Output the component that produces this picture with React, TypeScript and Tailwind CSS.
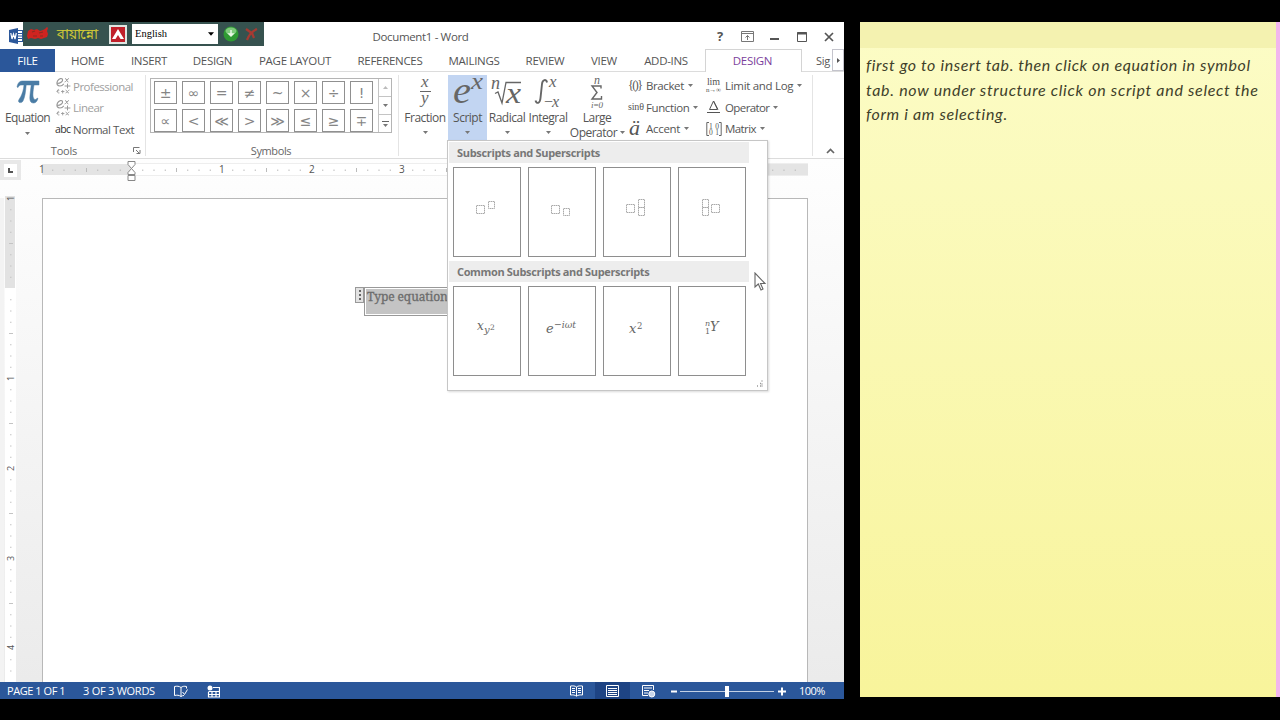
import React from "react";

const SANS = "font-['Open_Sans','Noto_Sans',sans-serif]";
const MATH = "DejaVu Serif, Liberation Serif, serif";
const SERIF = "Liberation Serif, serif";

function Caret({ className = "" }: { className?: string }) {
  return (
    <svg width="5" height="3" viewBox="0 0 5 3" className={`shrink-0 ${className}`}>
      <path d="M0 0h5L2.500 3z" fill="#777" />
    </svg>
  );
}

const tabs = [
  { t: "HOME", c: "w-[65px]" },
  { t: "INSERT", c: "w-[58px]" },
  { t: "DESIGN", c: "w-[69px]" },
  { t: "PAGE LAYOUT", c: "w-[96px]" },
  { t: "REFERENCES", c: "w-[94px]" },
  { t: "MAILINGS", c: "w-[74px]" },
  { t: "REVIEW", c: "w-[68px]" },
  { t: "VIEW", c: "w-[50px]" },
  { t: "ADD-INS", c: "w-[74px]" },
];

const symbols = ["±", "∞", "=", "≠", "~", "×", "÷", "!", "∝", "<", "≪", ">", "≫", "≤", "≥", "∓"];

function TitleBar() {
  return (
    <div className="flex h-[27px] w-full">
      <div className="flex w-[264px] pl-[9px]">
        <svg width="14" height="16" viewBox="0 0 14 16" className="mt-[6px] shrink-0">
          <rect x="7" y="2.500" width="6.500" height="11" fill="#fff" stroke="#2b579a" />
          <path d="M8 5.500h5M8 8h5M8 10.500h5" stroke="#2b579a" />
          <path d="M0 2l9-2v16l-9-2z" fill="#2b579a" />
          <path d="M1.800 5l1.200 6 1.500-5 1.500 5 1.300-6" fill="none" stroke="#fff" strokeWidth="1.200" />
        </svg>
        <div className="flex h-[24px] w-[241px] items-center bg-[#36524f]">
          <svg width="22" height="16" viewBox="0 0 22 16" className="ml-[4px] shrink-0">
            <path d="M1 5l3-2 3 1 3-1 3 2 3-1 2-1 2-2 1 1-1 3 1 3-1 3-3 1-3 1-3-1-3 1-4-1-3 1-1-3z" fill="#cf2420" />
            <path d="M5 6l3-1M12 7l4-1M6 10h4M13 10h3" stroke="#8b2a22" strokeWidth="1.200" />
          </svg>
          <span className="ml-[8px] w-[44px] whitespace-nowrap text-[13.500px] leading-[20px] tracking-[-0.4px] text-[#d8cf35] [-webkit-text-stroke:0.2px_#d8cf35]">বায়ান্নো</span>
          <svg width="18" height="19" viewBox="0 0 18 19" className="ml-[8px] shrink-0">
            <rect width="18" height="19" fill="#dfe6e2" />
            <rect x="2" y="2" width="14" height="15" fill="#c0202a" />
            <path d="M9 4l6 10h-3.500L9 10l-2.500 4H3z" fill="#fff" />
          </svg>
          <div className="ml-[5px] flex h-[20px] w-[86px] items-center justify-between bg-white pl-[3px] pr-[4px]">
            <span className="font-['Liberation_Serif',serif] text-[10.500px] text-black">English</span>
            <svg width="6" height="4" viewBox="0 0 7 4"><path d="M0 0h7L3.500 4z" fill="#000" /></svg>
          </div>
          <svg width="16" height="16" viewBox="0 0 16 16" className="ml-[5px] shrink-0">
            <circle cx="8" cy="8" r="7.500" fill="#2f9a33" />
            <ellipse cx="8" cy="5" rx="5.500" ry="3.500" fill="#7fcb7c" />
            <path d="M8 4v5M6 8l2 2 2-2z" fill="#e9f8e6" stroke="#e9f8e6" strokeWidth="1.500" />
          </svg>
          <svg width="15" height="16" viewBox="0 0 15 16" className="ml-[5px] shrink-0">
            <path d="M2 3l7 5M13 3Q6 6 3 14M8 7l2 5" fill="none" stroke="#a63a32" strokeWidth="2.200" />
          </svg>
        </div>
      </div>
      <div className="flex w-[313px] items-center justify-center pt-[3px] text-[11.500px] text-[#555]">
        <span className="tracking-[-0.35px]">Document1 - Word</span>
      </div>
      <div className="flex flex-1 items-center justify-end pr-[10px] pt-[2px]">
        <span className="w-[10px] text-center text-[13px] font-bold text-[#555]">?</span>
        <svg width="13" height="11" viewBox="0 0 13 11" className="ml-[16px]">
          <path d="M.5 .5h12v10H.5zM.5 2.500h12M6.500 9V4.500M4.500 6.500l2-2 2 2" fill="none" stroke="#777" />
        </svg>
        <svg width="9" height="11" viewBox="0 0 9 11" className="ml-[16px]"><path d="M0 8h9" stroke="#555" strokeWidth="2" /></svg>
        <svg width="10" height="10" viewBox="0 0 10 10" className="ml-[18px]">
          <path d="M.5 .5h9v9H.5z" fill="none" stroke="#555" /><path d="M0 1.500h10" stroke="#555" strokeWidth="2" />
        </svg>
        <svg width="10" height="10" viewBox="0 0 10 10" className="ml-[17px]"><path d="M1 1l8 8M9 1L1 9" stroke="#555" strokeWidth="1.700" /></svg>
      </div>
    </div>
  );
}

function TabRow() {
  return (
    <div className="flex h-[23px] text-[11.500px] leading-[23px] tracking-[-0.3px] text-[#555]">
      <div className="w-[55px] bg-[#2b579a] text-center text-white">FILE</div>
      <div className="flex border-b border-[#dcdcdc]">
        {tabs.map((x) => (
          <div key={x.t + x.c} className={`${x.c} whitespace-nowrap text-center`}>{x.t}</div>
        ))}
        <div className="w-[2px]" />
      </div>
      <div className="w-[97px] border-x border-t border-[#d4d4d4] pr-[2px] text-center leading-[22px] text-[#7b3f9d]">DESIGN</div>
      <div className="flex flex-1 border-b border-[#dcdcdc]">
        <span className="w-[30px] whitespace-nowrap pl-[14px] text-[11px]">Sig</span>
        <div className="flex w-[12px] items-center justify-center border border-[#c4c4cc]">
          <svg width="3" height="5" viewBox="0 0 3 5"><path d="M0 0v5l3-2.500z" fill="#555" /></svg>
        </div>
      </div>
    </div>
  );
}

function ExIcon() {
  return (
    <svg width="17" height="18" viewBox="0 0 17 18" className="-mr-px shrink-0 overflow-visible" fill="none" stroke="#999" strokeLinecap="round">
      <path d="M2 6.500C6 6.500 8 4 7.500 2.500S4 1 2.500 4 2.500 9 5 9s3-1 3.500-1.800" strokeWidth="1.200" />
      <path d="M10.500 1.500c1.500 0 1 3.500 2.500 3.500M13.500 1.500c-1 0-2.500 3.500-3.500 3.500" />
      <path d="M10 9h5M12.500 7v4" />
      <path d="M2 14.500c2 0 2.500-2 1.300-2S1.500 16.500 4 16M6.500 14.500h2.500M7.700 13.500v2.500M11 13c1 0 1 3 2.500 3M14 13c-1 0-2 3-3 3" strokeWidth=".9" />
    </svg>
  );
}

function ToolsGroup() {
  return (
    <div className="mt-[3px] flex h-[81px] w-[146px] flex-col border-r border-[#e4e4e4]">
      <div className="flex h-[67px]">
        <div className="flex w-[55px] flex-col items-center">
          <svg width="26" height="28" viewBox="0 0 26 28" className="mt-[3px]">
            <path d="M2 9C3 4 5 3 8 3h16v4h-5c-1 6-1.500 11-.5 13 .8 2 2.500 2 3.800 0l.7.500c-1 3-2.500 4.500-4.500 4.500-3.500 0-4-3.500-3.500-8 .3-3 .7-6 1.200-10h-5C10.500 14 10 19 8 23c-1 2-4.500 2.300-4.500 0C3.500 21 8 18 9 7H7C5 7 4 7.500 3 9.500z" fill="#4a7ca5" stroke="#4a7ca5" strokeWidth=".5" />
          </svg>
          <span className="mt-[3px] text-[12px] leading-[18px] tracking-[-0.6px]">Equation</span>
          <Caret className="mt-[5px]" />
        </div>
        <div className="flex flex-col text-[11.500px] leading-[21px]">
          <div className="flex h-[22px] items-center gap-[2px] text-[#a0a0a0]"><ExIcon /><span className="tracking-[-0.5px]">Professional</span></div>
          <div className="flex h-[21px] items-center gap-[2px] text-[#a0a0a0]"><ExIcon /><span className="tracking-[-0.5px]">Linear</span></div>
          <div className="flex h-[22px] items-center gap-[3px] whitespace-nowrap"><span className="w-[15px] text-[10.500px] tracking-[-0.6px] text-[#333]">abc</span><span className="tracking-[-0.45px]">Normal Text</span></div>
        </div>
      </div>
      <div className="flex h-[17px] items-center">
        <span className="w-[128px] pt-[5px] text-center text-[11px] tracking-[-0.2px] text-[#666]">Tools</span>
        <svg width="8" height="7" viewBox="0 0 8 7" className="ml-[5px] mt-[4px]">
          <path d="M.5 5V.5h6M3 3l3 3M7 3v3.500H3.500" fill="none" stroke="#777" />
        </svg>
      </div>
    </div>
  );
}

function SymbolsGroup() {
  return (
    <div className="mt-[3px] flex h-[81px] w-[253px] flex-col border-r border-[#e4e4e4] pl-[4px] pt-[3px]">
      <div className="flex h-[56px] w-[242px] border border-[#b5b5b5]">
        <div className="grid w-[227px] grid-cols-8 gap-y-[5px] pl-[3px] pt-[2px]">
          {symbols.map((s) => (
            <div key={s} className="flex h-[23px] w-[23px] items-center justify-center border border-[#909090] font-['DejaVu_Sans',sans-serif] text-[14px] leading-none text-[#858585]">{s}</div>
          ))}
        </div>
        <div className="flex w-[13px] flex-col border-l border-[#c4c4c4]">
          <div className="flex flex-1 items-center justify-center"><svg width="5" height="3" viewBox="0 0 5 3"><path d="M0 3h5L2.500 0z" fill="#bbb" /></svg></div>
          <div className="flex flex-1 items-center justify-center border-y border-[#c4c4c4]"><Caret /></div>
          <div className="flex flex-1 flex-col items-center justify-center gap-[2px]"><div className="h-px w-[7px] bg-[#666]" /><Caret /></div>
        </div>
      </div>
      <div className="mt-[10px] h-[15px] w-[242px] text-center text-[11px] leading-[15px] tracking-[-0.4px] text-[#666]">Symbols</div>
    </div>
  );
}

function BigButton({ label, width, active, children }: { label: string; width: string; active?: boolean; children: React.ReactNode }) {
  return (
    <div className={`${width} flex h-[65px] flex-col items-center ${active ? "bg-[#c2d5f2]" : ""}`}>
      <svg width="38" height="34" viewBox="0 0 38 34" className="shrink-0 overflow-visible" fill="#666" stroke="none" fontFamily={SERIF} fontStyle="italic">{children}</svg>
      <span className="whitespace-nowrap text-[12px] leading-[18px] tracking-[-0.5px]">{label}</span>
      <Caret className="mt-[4px]" />
    </div>
  );
}

function SmallItem({ label, icon, spacing }: { label: string; icon: React.ReactNode; spacing: string }) {
  return (
    <div className="flex h-[21.500px] items-center whitespace-nowrap text-[11.500px]">
      <svg width="18" height="18" viewBox="0 0 18 18" className="shrink-0 overflow-visible" fill="#555" fontFamily={SERIF}>{icon}</svg>
      <span className={spacing}>{label}</span>
      <Caret className="ml-[4px]" />
    </div>
  );
}

function StructuresGroup() {
  return (
    <div className="mt-[3px] flex h-[81px] w-[414px] border-r border-[#e4e4e4] pl-[1px]">
      <BigButton label="Fraction" width="w-[50px]">
        <text x="15" y="12" fontSize="17">x</text><path d="M14 16.500h11" stroke="#666" /><text x="15" y="28" fontSize="17">y</text>
      </BigButton>
      <BigButton label="Script" width="w-[39px] -ml-[2px]" active>
        <text x="4" y="28" fontSize="37" textLength="18" lengthAdjust="spacingAndGlyphs">e</text><text x="22" y="14" fontSize="23" textLength="12" lengthAdjust="spacingAndGlyphs">x</text>
      </BigButton>
      <BigButton label="Radical" width="w-[40px]">
        <text x="3" y="14" fontSize="18">n</text><text x="18" y="28" fontSize="29" textLength="15" lengthAdjust="spacingAndGlyphs">x</text>
        <path d="M7 18.500l3-1.500 4 11 4-20.500h15" fill="none" stroke="#666" strokeWidth="1.300" />
      </BigButton>
      <BigButton label="Integral" width="w-[42px]">
        <path d="M18 7.500C17.500 4 13.500 4 13 9L11.500 23c-.5 6-4 6-5 2.500" fill="none" stroke="#666" strokeWidth="1.900" />
        <text x="20" y="12" fontSize="17">x</text><text x="14" y="32" fontSize="16" textLength="16">−x</text>
      </BigButton>
      <div className="-ml-px mr-px flex h-[65px] w-[58px] flex-col items-center">
        <svg width="20" height="34" viewBox="0 0 20 34" className="shrink-0 overflow-visible" fill="#666" fontFamily={SERIF} fontStyle="italic">
          <text x="7" y="9" fontSize="12">n</text>
          <path d="M14 13.500V11H5l5 6.500-5 6.500h9.500v-3" fill="none" stroke="#666" strokeWidth="1.400" />
          <text x="4" y="33" fontSize="9" textLength="12">i=0</text>
        </svg>
        <span className="text-[12px] leading-[18px] tracking-[-0.5px]">Large</span>
        <span className="-mt-[2px] ml-px flex items-center gap-[3px] text-[12px] leading-[15px] tracking-[-0.5px]">Operator<Caret /></span>
      </div>
      <div className="flex w-[79px] flex-col pl-[1px]">
        <SmallItem label="Bracket" spacing="tracking-[-0.4px]" icon={<text x="0" y="12" fontSize="12" textLength="15">{"{()}"}</text>} />
        <SmallItem label="Function" spacing="tracking-[-0.4px]" icon={<text x="0" y="12" fontSize="10" textLength="16">sinθ</text>} />
        <SmallItem label="Accent" spacing="tracking-[-0.3px]" icon={<text x="1" y="15" fontSize="22" fontStyle="italic">ä</text>} />
      </div>
      <div className="flex flex-col">
        <SmallItem label="Limit and Log" spacing="pl-[1px] tracking-[-0.3px]" icon={<><text x="1" y="8" fontSize="10" textLength="13">lim</text><text x="0" y="15" fontSize="7" textLength="15">n→∞</text></>} />
        <SmallItem label="Operator" spacing="pl-[1px] tracking-[-0.6px]" icon={<path d="M3.500 11.500L7.500 3l4 8.500zM1 14.500h13M7.500 3l4.500 8.500" fill="none" stroke="#555" />} />
        <SmallItem label="Matrix" spacing="pl-[1px] tracking-[-0.6px]" icon={<><path d="M3 2.500H.8v13H3M13 2.500h2.200v13H13" fill="none" stroke="#666" /><text x="3" y="8.500" fontSize="7.500" textLength="10">1 0</text><text x="3" y="15" fontSize="7.500" textLength="10">0 1</text></>} />
      </div>
    </div>
  );
}

function HorizontalRuler() {
  const ticks = Array.from({ length: 67 }, (_, i) => i + 1);
  return (
    <div className="flex h-[21px]">
      <div className="mt-px flex h-[20px] w-[21px] items-center justify-center bg-[#e8e8e8]">
        <div className="flex h-[13px] w-[13px] items-center justify-center bg-white">
          <svg width="5" height="5" viewBox="0 0 5 5"><path d="M1 0v4h4" fill="none" stroke="#555" strokeWidth="2" /></svg>
        </div>
      </div>
      <svg width="780" height="22" viewBox="36 159 780 22" className="ml-[15px] shrink-0" fontFamily="Open Sans, sans-serif" fontSize="10" fill="#555">
        <rect x="42" y="164" width="766" height="11" fill="#fff" />
        <rect x="42" y="164" width="90" height="11" fill="#e4e4e4" />
        <rect x="718" y="164" width="90" height="11" fill="#e4e4e4" />
        {ticks.map((i) => {
          const x = 41.5 + i * 11.25;
          if (i % 8 === 0) return null;
          return <path key={i} d={i % 4 === 0 ? `M${x} 168v4` : `M${x} 169.500v1.500`} stroke="#bbb" />;
        })}
        <path d="M132 163.500h676M132 175.500h676" stroke="#eee" />
        <text x="39" y="173">1</text><text x="219" y="173">1</text><text x="309" y="173">2</text><text x="399" y="173">3</text>
        <path d="M128 161.500h7v3l-3.500 4-3.500-4zM131.500 168.500l3.500 4v2h-7v-2zM128 175.500h7v5h-7z" fill="#fff" stroke="#888" />
      </svg>
    </div>
  );
}

function VerticalRuler() {
  const nums = [["1", 198], ["1", 378], ["2", 468], ["3", 558], ["4", 647]] as const;
  const ticks = Array.from({ length: 43 }, (_, i) => i);
  return (
    <svg width="42" height="502" viewBox="0 180 42 502" className="shrink-0" fontFamily="Open Sans, sans-serif" fontSize="9" fill="#555">
      <rect x="0" y="198" width="4" height="484" fill="#f3f3f3" />
      <rect x="5" y="198" width="11" height="484" fill="#fff" />
      <rect x="5" y="196" width="10" height="92" fill="#e2e2e2" />
      {ticks.map((i) => {
        const y = 198.5 + i * 11.25;
        if (i % 8 === 0) return null;
        return <path key={i} d={i % 4 === 0 ? `M9 ${y}h4` : `M10 ${y}h1.500`} stroke="#c4c4c4" />;
      })}
      {nums.map(([n, y]) => (
        <text key={y} transform={`translate(14 ${y + 3}) rotate(-90)`}>{n}</text>
      ))}
    </svg>
  );
}

function Cell({ children }: { children: React.ReactNode }) {
  return (
    <div className="h-[90px] w-[68px] border border-[#8e8e8e] bg-white">
      <svg width="66" height="88" viewBox="0 0 66 88" fill="#666" fontFamily={MATH} fontStyle="italic">{children}</svg>
    </div>
  );
}

const box = { fill: "none", stroke: "#aaa", strokeDasharray: "1.500 .5" };

function ScriptMenu() {
  return (
    <div className="absolute left-[447px] top-[118px] h-[251px] w-[321px] border border-[#c6c6c6] bg-white pl-px pt-px shadow-[1px_1px_2px_rgba(0,0,0,0.15)]">
      <div className="h-[21px] w-[300px] bg-[#ededed] pl-[8px] text-[11px] font-bold leading-[21px] text-[#777]"><span className="tracking-[-0.33px]">Subscripts and Superscripts</span></div>
      <div className="flex gap-[7px] pl-[4px] pt-[4px]">
        <Cell><rect x="22.500" y="37.500" width="8" height="8" {...box} /><rect x="34.500" y="33.500" width="6" height="7" {...box} /></Cell>
        <Cell><rect x="22.500" y="37.500" width="8" height="8" {...box} /><rect x="34.500" y="40.500" width="6" height="7" {...box} /></Cell>
        <Cell><rect x="22.500" y="36.500" width="8" height="8" {...box} /><rect x="34.500" y="31.500" width="6" height="8" {...box} /><rect x="34.500" y="39.500" width="6" height="8" {...box} /></Cell>
        <Cell><rect x="23.500" y="31.500" width="6" height="8" {...box} /><rect x="23.500" y="39.500" width="6" height="8" {...box} /><rect x="32.500" y="36.500" width="8" height="8" {...box} /></Cell>
      </div>
      <div className="mt-[4px] h-[21px] w-[300px] bg-[#ededed] pl-[8px] text-[11px] font-bold leading-[21px] text-[#777]"><span className="tracking-[-0.35px]">Common Subscripts and Superscripts</span></div>
      <div className="flex gap-[7px] pl-[4px] pt-[4px]">
        <Cell><text x="23" y="43" fontSize="12">x</text><text x="30" y="46" fontSize="10">y</text><text x="36" y="43" fontSize="7.500" fontStyle="normal">2</text></Cell>
        <Cell><text x="17" y="46" fontSize="13">e</text><text x="25" y="41" fontSize="10" textLength="22" lengthAdjust="spacingAndGlyphs">−iωt</text></Cell>
        <Cell><text x="25" y="46" fontSize="13">x</text><text x="33" y="42" fontSize="8.500" fontStyle="normal">2</text></Cell>
        <Cell><text x="26" y="39" fontSize="8">n</text><text x="26" y="47" fontSize="8" fontStyle="normal">1</text><text x="31" y="44" fontSize="13">Y</text></Cell>
      </div>
      <div className="flex justify-end pr-[4px] pt-[4px]">
        <svg width="7" height="7" viewBox="0 0 7 7"><path d="M1 6h1M4 6h1M4 3.500h1M5.500 1h1M5.500 4h1M5.500 6h1" stroke="#999" strokeWidth="1.300" /></svg>
      </div>
      <svg width="13" height="19" viewBox="0 0 13 19" className="absolute left-[306px] top-[131px]">
        <path d="M1 1v14l3.300-3 2.700 6 2-1-2.500-5.500H11z" fill="#fff" stroke="#666" strokeWidth="1.100" />
      </svg>
    </div>
  );
}

function StatusBar() {
  return (
    <div className="flex h-[17px] w-full shrink-0 items-center bg-[#2b579a] pl-[7px] pt-px text-[11px] leading-[16px] text-white">
      <span className="w-[76px] whitespace-nowrap tracking-[-0.45px]">PAGE 1 OF 1</span>
      <span className="w-[91px] whitespace-nowrap tracking-[-0.25px]">3 OF 3 WORDS</span>
      <svg width="14" height="13" viewBox="0 0 14 13" fill="none" stroke="#fff">
        <path d="M7 2.500C5 1 3 1 .5 1.500v9C3 10 5 10 7 11.500V2.500C8.500 1.300 10 1 12.500 1.500v2M7 11.500c1-.8 2-1 3-1M8.500 7l2 2.500 3-5" />
      </svg>
      <svg width="13" height="13" viewBox="0 0 13 13" className="ml-[19px]">
        <circle cx="3" cy="3" r="2.500" fill="#fff" />
        <path d="M6 2.500h6.500V12H1.500V7M1.500 6.500h11M1.500 9.500h11M5 6v6M9 6v6" fill="none" stroke="#fff" strokeWidth="1.200" />
      </svg>
      <div className="flex-1" />
      <svg width="13" height="12" viewBox="0 0 13 12" fill="none" stroke="#fff">
        <path d="M6.500 2C5 .8 3 .7.5 1v9c2.500-.3 4.500 0 6 1.200C8 10 10 9.700 12.500 10V1C10 .7 8 .8 6.500 2v9M2 3.500h3M2 5.500h3M2 7.500h3M8 3.500h3M8 5.500h3M8 7.500h3" />
      </svg>
      <div className="-mt-px ml-[12px] flex h-[17px] w-[35px] items-center justify-center bg-[#1e4484] pt-px">
        <svg width="13" height="12" viewBox="0 0 13 12" fill="none" stroke="#fff"><path d="M.5 .5h12v11H.5zM2 3.500h9M2 5.500h9M2 7.500h9M2 9.500h9" /></svg>
      </div>
      <svg width="14" height="13" viewBox="0 0 14 13" className="ml-[12px]" fill="none" stroke="#fff">
        <path d="M11.500 5V.5H.5v10H6M2 3h8M2 5.500h5M2 8h4" /><circle cx="9.800" cy="9" r="3" fill="#c9d6ea" />
      </svg>
      <svg width="116" height="13" viewBox="0 0 116 13" className="ml-[14px]">
        <path d="M1 6.500h6M108 6.500h8M112 2.500v8" stroke="#fff" strokeWidth="2" />
        <path d="M10 6.500h94" stroke="#c3d0e5" /><rect x="55" y="1" width="4" height="11" fill="#fff" />
      </svg>
      <span className="ml-[13px] w-[45px] tracking-[-0.5px]">100%</span>
    </div>
  );
}

export default function App() {
  return (
    <div className={`flex h-[720px] w-[1280px] overflow-hidden bg-black pt-[22px] text-[#555] ${SANS}`}>
      <div className="relative flex h-[677px] w-[844px] flex-col overflow-hidden bg-white">
        <TitleBar />
        <TabRow />
        <div className="flex h-[87px] shrink-0 border-b border-[#dcdcdc]">
          <ToolsGroup />
          <SymbolsGroup />
          <StructuresGroup />
          <div className="flex flex-1 items-end justify-center pb-[4px]">
            <svg width="9" height="6" viewBox="0 0 9 6" className="ml-[4px]"><path d="M1 5l3.500-3.500L8 5" fill="none" stroke="#666" strokeWidth="1.700" /></svg>
          </div>
        </div>
        <div className="flex h-[523px] flex-col bg-gradient-to-b from-[#fefefe] to-[#ebebeb]">
          <HorizontalRuler />
          <div className="flex h-[502px]">
            <VerticalRuler />
            <div className="mt-[18px] flex-1 border border-b-0 border-[#b8b8b8] bg-white pl-[312px] pt-[88px]">
              <div className="flex items-start">
                <div className="flex h-[16px] w-[9px] items-center justify-center border border-[#999] bg-[#e2e2e2]">
                  <svg width="2" height="10" viewBox="0 0 2 10"><path d="M0 0h2v2H0zM0 4h2v2H0zM0 8h2v2H0z" fill="#666" /></svg>
                </div>
                <div className="h-[29px] w-[200px] border border-[#999] p-[1px]">
                  <div className="h-full overflow-hidden whitespace-nowrap bg-[#c4c4c4] pl-px font-['Noto_Serif','DejaVu_Serif',serif] text-[12px] leading-[16px] tracking-[-0.1px] text-[#6c6c6c] [-webkit-text-stroke:0.3px_#6c6c6c]">Type equation here.</div>
                </div>
              </div>
            </div>
            <div className="w-[36px]" />
          </div>
        </div>
        <StatusBar />
        <ScriptMenu />
      </div>
      <div className="ml-[16px] flex h-[675px] w-[416px] bg-gradient-to-b from-[#fcfcc6] to-[#f8f49b]">
        <div className="flex-1">
          <div className="h-[26px] bg-[#f4f2b0]" />
          <div className="whitespace-nowrap pl-[6px] pt-[5px] font-[Lato,sans-serif] text-[16px] italic leading-[24.500px] text-[#3f3f2a]">
            <div className="tracking-[0.61px]">first go to insert tab. then click on equation in symbol</div>
            <div className="tracking-[0.7px]">tab. now under structure click on script and select the</div>
            <div className="tracking-[0.65px]">form i am selecting.</div>
          </div>
        </div>
      </div>
      <div className="h-[675px] w-[4px] bg-[#f2b6ee]" />
    </div>
  );
}
